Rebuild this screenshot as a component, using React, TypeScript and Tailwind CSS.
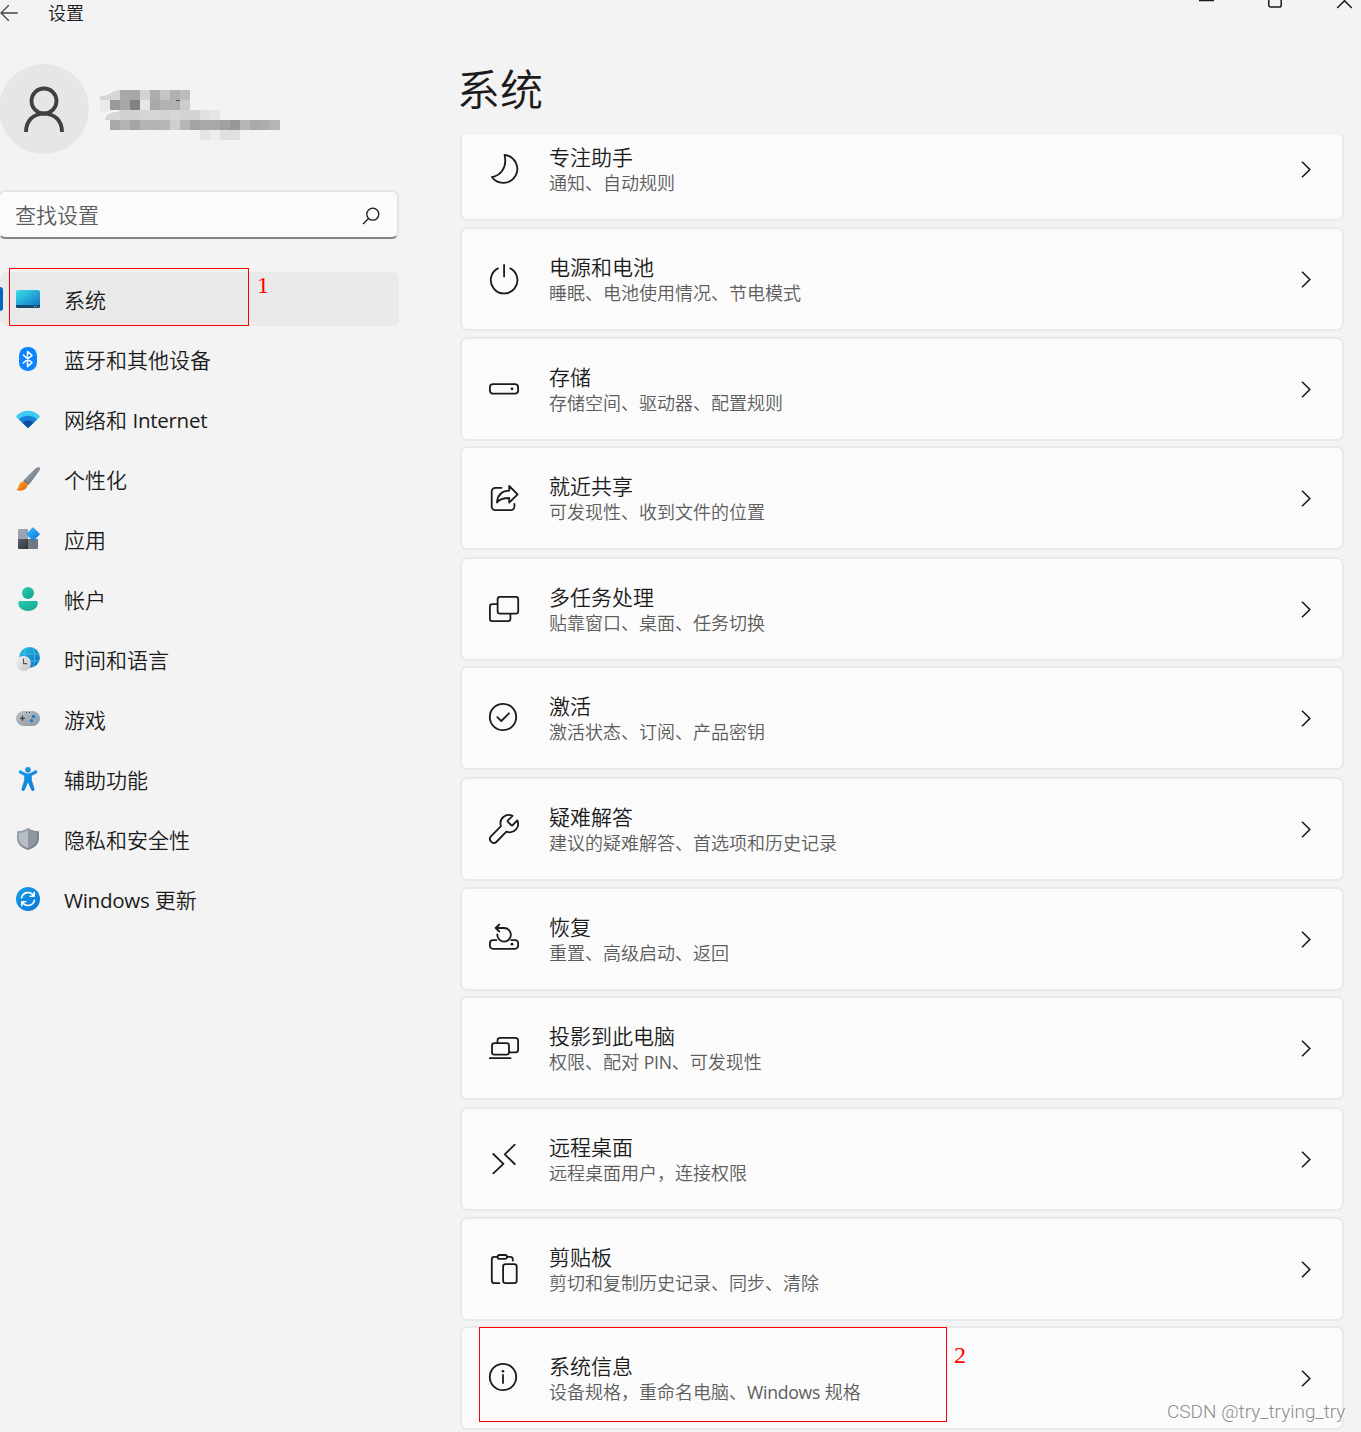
import type { ReactNode } from "react";

type Item = { title: string; sub: string; gap: string; icon: ReactNode };
type NavItem = { label: string; icon: ReactNode };

const Line = ({ children }: { children: ReactNode }) => (
  <svg
    viewBox="0 0 32 32"
    className="h-8 w-8 shrink-0"
    fill="none"
    stroke="#1b1b1b"
    strokeWidth="1.8"
    strokeLinecap="round"
    strokeLinejoin="round"
  >
    {children}
  </svg>
);

// Latin runs are set a touch tighter and heavier than the Chinese around them.
const Mixed = ({ text }: { text: string }) => (
  <>
    {text.split(/([A-Za-z]+)/).map((part, i) =>
      /[A-Za-z]/.test(part) ? (
        <span key={i} className="text-[0.98em] font-normal tracking-[-0.015em]">{part}</span>
      ) : (
        part
      )
    )}
  </>
);

const items: Item[] = [
  {
    title: "专注助手",
    sub: "通知、自动规则",
    gap: "mt-0",
    icon: <Line><path d="M16.6 2A14 14 0 1 1 3.9 24.1C11.5 22.6 19.6 16 16.6 2Z" /></Line>,
  },
  {
    title: "电源和电池",
    sub: "睡眠、电池使用情况、节电模式",
    gap: "mt-[6px]",
    icon: <Line><path d="M9.9 5.4A13.3 13.3 0 1 0 22.3 5.4M16.1 2V13.4" /></Line>,
  },
  {
    title: "存储",
    sub: "存储空间、驱动器、配置规则",
    gap: "mt-[6px]",
    icon: (
      <Line>
        <rect x="1.9" y="11.1" width="28.2" height="9.6" rx="3.2" />
        <circle cx="24" cy="15.8" r="1.4" fill="#1b1b1b" stroke="none" />
      </Line>
    ),
  },
  {
    title: "就近共享",
    sub: "可发现性、收到文件的位置",
    gap: "mt-[5px]",
    icon: (
      <Line>
        <path d="M13.5 5.8H7.3a3.6 3.6 0 0 0-3.6 3.6V24.6a3.6 3.6 0 0 0 3.6 3.6H22.8a3.6 3.6 0 0 0 3.6-3.6V22" />
        <path d="M21.2 4L29.6 12.4L21.2 20.6V16C15 16 11.5 17 9 20.5C9.5 13 14 9 21.2 8.7Z" />
      </Line>
    ),
  },
  {
    title: "多任务处理",
    sub: "贴靠窗口、桌面、任务切换",
    gap: "mt-[7px]",
    icon: (
      <Line>
        <rect x="9.6" y="3.8" width="20.6" height="16.8" rx="2.4" />
        <path d="M9.2 11.2H4.3a2.4 2.4 0 0 0-2.4 2.4V25.8a2.4 2.4 0 0 0 2.4 2.4H20a2.4 2.4 0 0 0 2.4-2.4V21" />
      </Line>
    ),
  },
  {
    title: "激活",
    sub: "激活状态、订阅、产品密钥",
    gap: "mt-[5px]",
    icon: (
      <Line>
        <circle cx="15" cy="15" r="13.2" />
        <path d="M9.3 15.2L13.3 19L21 11.3" />
      </Line>
    ),
  },
  {
    title: "疑难解答",
    sub: "建议的疑难解答、首选项和历史记录",
    gap: "mt-[7px]",
    icon: (
      <Line>
        <path d="M24.6 2.8C18-.2 10.4 5.4 13 13.2L2.9 23.4C-.2 26.6 4.6 32.4 8.3 29L18.4 18.7C26 21.4 32.4 14.4 29.3 7.4L24.8 12A1.2 1.2 0 0 1 23.1 12L19.9 8.8A1.2 1.2 0 0 1 19.9 7.3Z" />
      </Line>
    ),
  },
  {
    title: "恢复",
    sub: "重置、高级启动、返回",
    gap: "mt-[6px]",
    icon: (
      <Line>
        <path d="M8.4 17.1H4.9a3 3 0 0 0-3 3V22.8a3 3 0 0 0 3 3H27.1a3 3 0 0 0 3-3V20.1a3 3 0 0 0-3-3H23.2" />
        <path d="M7.7 5H16.2A6.8 6.8 0 1 1 9.3 11.4M11.3 1.5L7.6 5L11.3 8.5" />
        <circle cx="24" cy="21.2" r="1.4" fill="#1b1b1b" stroke="none" />
      </Line>
    ),
  },
  {
    title: "投影到此电脑",
    sub: "权限、配对 PIN、可发现性",
    gap: "mt-[5px]",
    icon: (
      <Line>
        <rect x="4" y="11.2" width="17" height="11.4" rx="2.4" />
        <path d="M9.5 10.8V8.4a2.6 2.6 0 0 1 2.6-2.6H27.5a2.6 2.6 0 0 1 2.6 2.6V17.8a2.6 2.6 0 0 1-2.6 2.6H21.4M1.8 26.2H22.5" />
      </Line>
    ),
  },
  {
    title: "远程桌面",
    sub: "远程桌面用户，连接权限",
    gap: "mt-[7px]",
    icon: <Line><path d="M5.3 11L15.4 20.8L5.3 30.4M26.7 1.6L16.8 11.3L26.7 21" /></Line>,
  },
  {
    title: "剪贴板",
    sub: "剪切和复制历史记录、同步、清除",
    gap: "mt-[6px]",
    icon: (
      <Line>
        <path d="M9.2 3.8H6.2a2.4 2.4 0 0 0-2.4 2.4V27.8a2.4 2.4 0 0 0 2.4 2.4H11.4M19.2 3.8H22.4a2.4 2.4 0 0 1 2.4 2.4V7.6" />
        <rect x="9.6" y="2" width="9.4" height="3.8" rx="1.9" />
        <rect x="15.1" y="11.2" width="13.6" height="19" rx="2.4" />
      </Line>
    ),
  },
  {
    title: "系统信息",
    sub: "设备规格，重命名电脑、Windows 规格",
    gap: "mt-[5px]",
    icon: (
      <Line>
        <circle cx="15" cy="15" r="13.2" />
        <path d="M15 13V21" />
        <circle cx="15" cy="9.2" r="1.3" fill="#1b1b1b" stroke="none" />
      </Line>
    ),
  },
];

const Color = ({ children }: { children: ReactNode }) => (
  <svg viewBox="0 0 24 24" className="h-6 w-6 shrink-0">{children}</svg>
);

const nav: NavItem[] = [
  {
    label: "系统",
    icon: (
      <Color>
        <path d="M0 5a2 2 0 0 1 2-2H22a2 2 0 0 1 2 2V18H0Z" fill="url(#screen)" />
        <path d="M0 18H24V19.5a1.5 1.5 0 0 1-1.5 1.5H1.5A1.5 1.5 0 0 1 0 19.5Z" fill="#0c4a6e" />
        <path d="M18 19h1v1h-1zM20.3 19h1v1h-1z" fill="#9fd8ee" />
      </Color>
    ),
  },
  {
    label: "蓝牙和其他设备",
    icon: (
      <Color>
        <rect x="3" y="0" width="18" height="24" rx="8.5" fill="#0a84ff" />
        <path d="M7.3 8L16 15.6L11.5 19.6V4.4L16 8.4L7.3 16" fill="none" stroke="#fff" strokeWidth="1.5" strokeLinejoin="round" strokeLinecap="round" />
      </Color>
    ),
  },
  {
    label: "网络和 Internet",
    icon: (
      <Color>
        <path d="M.6 10.2A1.2 1.2 0 0 1 .6 8.6C7 2.2 17 2.2 23.4 8.6A1.2 1.2 0 0 1 23.4 10.2L12.6 20.6a.9.9 0 0 1-1.2 0Z" fill="#3ccbf4" />
        <path d="M3 12.6C8 7.6 16 7.6 21 12.6L12.6 20.6a.9.9 0 0 1-1.2 0Z" fill="#1683d8" />
        <path d="M6.4 15.8C9.6 12.6 14.4 12.6 17.6 15.8L12.6 20.6a.9.9 0 0 1-1.2 0Z" fill="#0a4f9f" />
      </Color>
    ),
  },
  {
    label: "个性化",
    icon: (
      <Color>
        <path d="M22.8.3C24.2.4 24.4 1.8 23.4 3.4L13.4 17.2L8 12.8L19.4 1.6C20.6.5 21.9.1 22.8.3Z" fill="url(#handle)" />
        <path d="M8.2 12.8L13.3 17.1C12 18.6 10.4 17.9 7.4 14.2Z" fill="#566372" />
        <path d="M4.6 15.5C7 13.2 11.2 15 11.4 18C11.5 22.4 5.5 25 .2 22.9C3.3 21.7 2 17.8 4.6 15.5Z" fill="url(#flame)" />
      </Color>
    ),
  },
  {
    label: "应用",
    icon: (
      <Color>
        <path d="M3 2H12V12H2V3a1 1 0 0 1 1-1Z" fill="#9aa4ae" />
        <path d="M2 12H12V22H3a1 1 0 0 1-1-1Z" fill="url(#dark)" />
        <path d="M12 12H22V21a1 1 0 0 1-1 1H12Z" fill="#6e7783" />
        <path d="M16.3.7a1 1 0 0 1 1.4 0L23.5 6.4a1 1 0 0 1 0 1.4L17.7 13.4a1 1 0 0 1-1.4 0L10.6 7.8a1 1 0 0 1 0-1.4Z" fill="url(#blue)" />
      </Color>
    ),
  },
  {
    label: "帐户",
    icon: (
      <Color>
        <circle cx="12" cy="6" r="6" fill="url(#green)" />
        <path d="M4 14H20a1.8 1.8 0 0 1 1.8 1.8C21.8 20.5 18 24 12 24S2.2 20.5 2.2 15.8A1.8 1.8 0 0 1 4 14Z" fill="url(#green)" />
      </Color>
    ),
  },
  {
    label: "时间和语言",
    icon: (
      <Color>
        <circle cx="13.5" cy="10.4" r="10.4" fill="url(#globe)" />
        <path d="M3.6 7H23.4M3.8 14H23.2M10 .8C7.8 6 8 14 10.5 20M17 .8C19.2 6 19.2 14 17 20" fill="none" stroke="#3fbfe6" strokeWidth=".9" />
        <circle cx="7.5" cy="16.4" r="7.5" fill="url(#clock)" />
        <path d="M7.5 11.6V16.6H11" fill="none" stroke="#4f565d" strokeWidth="1.2" />
      </Color>
    ),
  },
  {
    label: "游戏",
    icon: (
      <Color>
        <rect x="0" y="4" width="24" height="15" rx="7.5" fill="url(#pad)" />
        <path d="M4 11.3H9M6.5 8.8V13.8" stroke="#3c4248" strokeWidth="1.3" />
        <circle cx="17.5" cy="9.5" r="1.7" fill="#0f7bd8" />
        <circle cx="15.5" cy="13.6" r="1.6" fill="#0f7bd8" />
        <path d="M10 5h1v1h-1zM13 5h1v1h-1z" fill="#474f57" />
      </Color>
    ),
  },
  {
    label: "辅助功能",
    icon: (
      <Color>
        <circle cx="12" cy="2.8" r="2.8" fill="#1690e0" />
        <path d="M2.8 4.3C3.2 3.3 4 3.1 5 3.6L9 5.8C11 6.8 13 6.8 15 5.8L19 3.6C20 3.1 20.9 3.3 21.2 4.3C21.6 5.2 21.2 5.9 20.3 6.4L15.8 8.8V13L18.4 21.8C18.7 22.8 18.2 23.6 17.3 23.9C16.3 24.2 15.6 23.7 15.2 22.8L12 15.6L8.8 22.8C8.4 23.7 7.7 24.2 6.7 23.9C5.8 23.6 5.3 22.8 5.6 21.8L8.2 13V8.8L3.7 6.4C2.8 5.9 2.4 5.2 2.8 4.3Z" fill="url(#blue2)" />
      </Color>
    ),
  },
  {
    label: "隐私和安全性",
    icon: (
      <Color>
        <path d="M12 .8C14.8 3.1 18 4.2 23 4.2V11C23 17 19 20.7 12 23C5 20.7 1 17 1 11V4.2C6 4.2 9.2 3.1 12 .8Z" fill="url(#shield)" />
        <path d="M12 3C14.3 4.8 17.5 5.8 21 6V11C21 16 18 19 12 21Z" fill="#8f969f" />
        <path d="M12 3C9.7 4.8 6.5 5.8 3 6V11C3 16 6 19 12 21Z" fill="#b9bfc6" />
      </Color>
    ),
  },
  {
    label: "Windows 更新",
    icon: (
      <Color>
        <circle cx="12" cy="12" r="12" fill="url(#blue2)" />
        <path d="M5.6 10.6A6.6 6.6 0 0 1 17.7 8.8M18.4 13.4A6.6 6.6 0 0 1 6.3 15.2M18.2 5.4V9.3H14.3M5.8 18.6V14.7H9.7" fill="none" stroke="#fff" strokeWidth="1.6" strokeLinecap="round" strokeLinejoin="round" />
      </Color>
    ),
  },
];

const Grad = ({ id, from, to }: { id: string; from: string; to: string }) => (
  <linearGradient id={id} x1="0" y1="0" x2="1" y2="1">
    <stop offset="0" stopColor={from} />
    <stop offset="1" stopColor={to} />
  </linearGradient>
);

const Gradients = () => (
  <svg className="absolute h-0 w-0">
    <defs>
      <Grad id="screen" from="#3be0ea" to="#1276c8" />
      <Grad id="handle" from="#a9b1ba" to="#5d6874" />
      <Grad id="flame" from="#ffb227" to="#e8590c" />
      <Grad id="dark" from="#5b6168" to="#2f3439" />
      <Grad id="blue" from="#3cc3f7" to="#0a6fd8" />
      <Grad id="blue2" from="#1a9fe8" to="#0a76d6" />
      <Grad id="green" from="#27cbb2" to="#14a58d" />
      <Grad id="globe" from="#2cc8e2" to="#0c62bd" />
      <Grad id="clock" from="#f4f4f4" to="#c0c4c8" />
      <Grad id="pad" from="#bcc3ca" to="#8f979f" />
      <Grad id="shield" from="#a3abb4" to="#6a727b" />
    </defs>
  </svg>
);

const mosaic: [number, number, string[]][] = [
  [20, 0, ["#a9a9a9", "#a7a7a7", "#d3d3d3", "#adadad", "#c4c4c4", "#b0b0b0", "#bcbcbc"]],
  [10, 10, ["#9a9a9a", "#a7a7a7", "#828282", "#e6e6e6", "#a9a9a9", "#b3b3b3", "#b0b0b0", "#cdcdcd"]],
  [20, 20, ["#d1d1d1", "#d1d1d1", "#d4d4d4", "#d6d6d6", "#d3d3d3", "#d6d6d6", "#d4d4d4", "#d4d4d4", "#e0e0e0", "#e6e6e6"]],
  [10, 30, ["#a9a9a9", "#b3b3b3", "#a5a5a5", "#b5b5b5", "#b3b3b3", "#b6b6b6", "#cfcfcf", "#b6b6b6", "#a3a3a3", "#a9a9a9", "#a9a9a9", "#a1a1a1", "#979797", "#b6b6b6", "#a9a9a9", "#adadad", "#b5b5b5"]],
  [100, 40, ["#e5e5e5", "#ededed", "#e0e0e0", "#e0e0e0"]],
];

const BlurredName = () => (
  <svg width="180" height="50" viewBox="0 0 180 50" shapeRendering="crispEdges">
    <path d="M0 7C5 5 9 5 11 3C14 1 16 0 20 0V10H0Z" fill="#d6d6d6" />
    <path d="M0 10H10V21L0 23Z" fill="#ebebeb" />
    <path d="M5 30C5 24 10 23 20 21V30Z" fill="#d8d8d8" />
    {mosaic.map(([x, y, row]) =>
      row.map((c, i) => <rect key={`${x}-${y}-${i}`} x={x + i * 10} y={y} width="10" height="10" fill={c} />)
    )}
    <path d="M76 10H80" stroke="#555" />
  </svg>
);

const Card = ({ item }: { item: Item }) => (
  <div className={`flex h-[104px] shrink-0 items-center rounded-[7px] border-2 border-[#e9e9e9] bg-[#fbfbfb] pl-[26px] pr-[30px] ${item.gap}`}>
    {item.icon}
    <div className="ml-[29px] mt-[2px] flex flex-1 flex-col">
      <div className="text-[21px] leading-[25px] text-[#1b1b1b]"><Mixed text={item.title} /></div>
      <div className="-mb-px mt-px text-[18px] leading-[25px] text-[#5d5d5d]"><Mixed text={item.sub} /></div>
    </div>
    <svg width="12" height="18" viewBox="0 0 12 18" fill="none" stroke="#1b1b1b" strokeWidth="1.6">
      <path d="M2 1.7L9.8 9.5L2 17.3" />
    </svg>
  </div>
);

export default function App() {
  return (
    <div className="relative flex h-[1432px] w-[1361px] flex-col overflow-hidden bg-[#f3f3f3] font-['Open_Sans','Noto_Sans_CJK_SC',sans-serif] font-[350] text-[#1b1b1b]">
      <Gradients />
      <header className="flex h-7 shrink-0 items-start">
        <svg width="19" height="28" viewBox="0 0 19 28" fill="none" stroke="#444" strokeWidth="1.3">
          <path d="M17.8 13H.8M8.8 5.2L1 13L8.8 20.8" />
        </svg>
        <span className="ml-[29px] text-[18px] leading-[27px]">设置</span>
        <svg className="ml-auto mr-[7px]" width="156" height="10" viewBox="0 0 156 10" fill="none" stroke="#1b1b1b" strokeWidth="1.5">
          <path d="M1 .4H16M70.8-1V5.2a1.8 1.8 0 0 0 1.8 1.8H81.4a1.8 1.8 0 0 0 1.8-1.8V-1M139.2 8L146.5 .7L153.8 8" />
        </svg>
      </header>

      <div className="flex min-h-0 flex-1">
        <aside className="flex w-[399px] shrink-0 flex-col">
          <div className="mt-9 flex h-[90px] items-start">
            <div className="-ml-px flex h-[90px] w-[90px] items-center justify-center rounded-full bg-[#e6e6e6]">
              <svg width="42" height="48" viewBox="0 0 42 48" fill="none" stroke="#404040" strokeWidth="3.8">
                <circle cx="21" cy="16" r="12.5" />
                <path d="M3 47C3 36 10 28.6 21 28.6S39 36 39 47" />
              </svg>
            </div>
            <div className="ml-[11px] mt-[26px]"><BlurredName /></div>
          </div>

          <div className="-ml-[2px] mt-[36px] flex h-[49px] w-[401px] items-center rounded-[7px] border-2 border-[#e5e5e5] border-b-[#868686] bg-[#fbfbfb] pl-[15px] pr-[17px]">
            <span className="flex-1 text-[21px] leading-[30px] text-[#5d5d5d]">查找设置</span>
            <svg className="mt-[2px]" width="18" height="18" viewBox="0 0 18 18" fill="none" stroke="#1b1b1b" strokeWidth="1.3">
              <circle cx="10.8" cy="7.2" r="6" />
              <path d="M6.5 11.5L1 17" />
            </svg>
          </div>

          <nav className="mt-[33px] flex flex-col gap-[6px]">
            {nav.map((n, i) => (
              <div
                key={n.label}
                className={i === 0 ? "flex h-[54px] items-center rounded-[7px] bg-[#eaeaea]" : "flex h-[54px] items-center"}
              >
                <span className={i === 0 ? "h-6 w-[3px] rounded-r-[3px] bg-[#0067c0]" : "h-6 w-[3px]"} />
                <span className="ml-[13px] flex">{n.icon}</span>
                <span className="ml-[24px] mt-px text-[21px] leading-[30px]"><Mixed text={n.label} /></span>
              </div>
            ))}
          </nav>
        </aside>

        <main className="ml-[60px] flex flex-1 flex-col">
          <h1 className="-ml-[2px] mt-[32px] h-[75px] text-[43px] leading-[60px]">系统</h1>
          <div className="ml-px mr-[17px] flex min-h-0 flex-1 flex-col overflow-hidden">
            <div className="-mt-[18px] flex flex-col">
              {items.map((item) => <Card key={item.title} item={item} />)}
            </div>
          </div>
        </main>
      </div>

      <div className="absolute left-[9px] top-[268px] h-[58px] w-[240px] border border-[#ff0000]" />
      <span className="absolute left-[257px] top-[271px] font-['Liberation_Serif',serif] text-[24px] leading-[28px] text-[#ff0000]">1</span>
      <div className="absolute left-[479px] top-[1327px] h-[95px] w-[468px] border border-[#ff0000]" />
      <span className="absolute left-[954px] top-[1341px] font-['Liberation_Serif',serif] text-[24px] leading-[28px] text-[#ff0000]">2</span>
      <span className="absolute left-[1167px] top-[1400px] whitespace-nowrap font-['Roboto',sans-serif] text-[19px] leading-[24px] text-[#8c8c8c] [text-shadow:1px_1px_0_#ffffff]">CSDN @try_trying_try</span>
    </div>
  );
}
